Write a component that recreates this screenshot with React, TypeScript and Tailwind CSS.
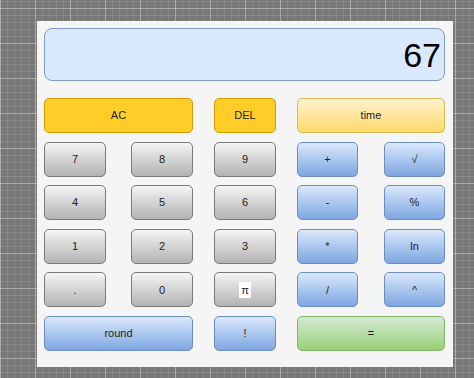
import type { ReactNode } from "react";

type Tone = "gray" | "blue" | "yellow" | "time" | "green";

const toneClass: Record<Tone, string> = {
  gray: "border-[#7a7a7a] bg-gradient-to-b from-[#f5f5f5] to-[#b3b3b3]",
  blue: "border-[#6c8ebf] bg-gradient-to-b from-[#dae8fc] to-[#7ea6e0]",
  yellow: "border-[#d79b00] bg-[#ffcd28]",
  time: "border-[#d6b656] bg-gradient-to-b from-[#fff2cc] to-[#ffd966]",
  green: "border-[#82b366] bg-gradient-to-b from-[#d5e8d4] to-[#97d077]",
};

function Key({
  tone,
  className,
  children,
}: {
  tone: Tone;
  className: string;
  children: ReactNode;
}) {
  return (
    <button
      className={`${className} ${toneClass[tone]} flex items-center justify-center rounded-[5px] border text-[11px] text-[#222]`}
    >
      {children}
    </button>
  );
}

export default function App() {
  return (
    <div className="h-[378px] w-[474px] overflow-hidden bg-[#787878] bg-[linear-gradient(to_right,rgba(255,255,255,0.28)_1px,transparent_1px),linear-gradient(to_bottom,rgba(255,255,255,0.28)_1px,transparent_1px),linear-gradient(to_right,rgba(255,255,255,0.1)_1px,transparent_1px),linear-gradient(to_bottom,rgba(255,255,255,0.1)_1px,transparent_1px)] bg-[size:35px_35px,35px_35px,7px_7px,7px_7px] bg-[position:0_8px,0_8px,0_1px,0_1px] pl-[37px] pt-[21px] font-['Liberation_Sans',Arial,sans-serif]">
      <div className="h-[346px] w-[416px] bg-[#f5f5f5] pl-[7px] pt-[7px]">
        <div className="flex h-[53px] w-[401px] items-center justify-end rounded-[8px] border border-[#7f9bc6] bg-[#dae8fc] pr-[3px] text-[34px] leading-none text-black">
          67
        </div>

        <div className="mt-[17px] grid w-[401px] grid-cols-[62px_25px_62px_21px_62px_21px_61px_26px_61px] grid-rows-[35px_35px_35px_35px_35px_35px] gap-y-[8.6px]">
          <Key tone="yellow" className="col-start-1 col-end-4">AC</Key>
          <Key tone="yellow" className="col-start-5">DEL</Key>
          <Key tone="time" className="col-start-7 col-end-10">time</Key>

          <Key tone="gray" className="col-start-1">7</Key>
          <Key tone="gray" className="col-start-3">8</Key>
          <Key tone="gray" className="col-start-5">9</Key>
          <Key tone="blue" className="col-start-7">+</Key>
          <Key tone="blue" className="col-start-9">√</Key>

          <Key tone="gray" className="col-start-1">4</Key>
          <Key tone="gray" className="col-start-3">5</Key>
          <Key tone="gray" className="col-start-5">6</Key>
          <Key tone="blue" className="col-start-7">-</Key>
          <Key tone="blue" className="col-start-9">%</Key>

          <Key tone="gray" className="col-start-1">1</Key>
          <Key tone="gray" className="col-start-3">2</Key>
          <Key tone="gray" className="col-start-5">3</Key>
          <Key tone="blue" className="col-start-7">*</Key>
          <Key tone="blue" className="col-start-9">ln</Key>

          <Key tone="gray" className="col-start-1">.</Key>
          <Key tone="gray" className="col-start-3">0</Key>
          <Key tone="gray" className="col-start-5">
            <span className="bg-white px-[2px]">π</span>
          </Key>
          <Key tone="blue" className="col-start-7">/</Key>
          <Key tone="blue" className="col-start-9">^</Key>

          <Key tone="blue" className="col-start-1 col-end-4">round</Key>
          <Key tone="blue" className="col-start-5">!</Key>
          <Key tone="green" className="col-start-7 col-end-10">=</Key>
        </div>
      </div>
    </div>
  );
}
